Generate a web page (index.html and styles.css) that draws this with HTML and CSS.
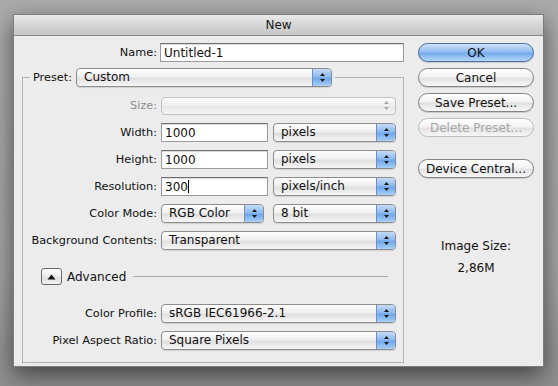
FILE: index.html
```html
<!DOCTYPE html>
<html lang="en">
<head>
    <meta charset="UTF-8">
    <title>New</title>
    <link rel="stylesheet" href="styles.css">
</head>
<body>

    <div class="dialog">
        <div class="titlebar">New</div>

        <div class="dialog-body">
            <!-- left: document settings -->
            <div class="main">
                <div class="name-row">
                    <span class="lbl name-lbl">Name:</span>
                    <div class="field name-field">Untitled-1</div>
                </div>

                <fieldset class="group">
                    <legend>
                        <span class="legend-lbl">Preset:</span>
                        <div class="select preset">
                            <span class="value">Custom</span>
                            <span class="arrows"><svg width="7" height="11" viewBox="0 0 7 11"><path d="M3.5 1 L6 4 L1 4 Z M3.5 10 L6 7 L1 7 Z" fill="#1a1a1a"/></svg></span>
                        </div>
                    </legend>

                    <div class="row">
                        <span class="lbl disabled">Size:</span>
                        <div class="select size off">
                            <span class="value"></span>
                            <span class="arrows"><svg width="7" height="11" viewBox="0 0 7 11"><path d="M3.5 1 L6 4 L1 4 Z M3.5 10 L6 7 L1 7 Z" fill="#a8a8a8"/></svg></span>
                        </div>
                    </div>

                    <div class="row">
                        <span class="lbl">Width:</span>
                        <div class="field num">1000</div>
                        <div class="select unit">
                            <span class="value">pixels</span>
                            <span class="arrows"><svg width="7" height="11" viewBox="0 0 7 11"><path d="M3.5 1 L6 4 L1 4 Z M3.5 10 L6 7 L1 7 Z" fill="#1a1a1a"/></svg></span>
                        </div>
                    </div>

                    <div class="row">
                        <span class="lbl">Height:</span>
                        <div class="field num">1000</div>
                        <div class="select unit">
                            <span class="value">pixels</span>
                            <span class="arrows"><svg width="7" height="11" viewBox="0 0 7 11"><path d="M3.5 1 L6 4 L1 4 Z M3.5 10 L6 7 L1 7 Z" fill="#1a1a1a"/></svg></span>
                        </div>
                    </div>

                    <div class="row">
                        <span class="lbl">Resolution:</span>
                        <div class="field num">300<span class="caret"></span></div>
                        <div class="select unit">
                            <span class="value">pixels/inch</span>
                            <span class="arrows"><svg width="7" height="11" viewBox="0 0 7 11"><path d="M3.5 1 L6 4 L1 4 Z M3.5 10 L6 7 L1 7 Z" fill="#1a1a1a"/></svg></span>
                        </div>
                    </div>

                    <div class="row">
                        <span class="lbl">Color Mode:</span>
                        <div class="select mode">
                            <span class="value">RGB Color</span>
                            <span class="arrows"><svg width="7" height="11" viewBox="0 0 7 11"><path d="M3.5 1 L6 4 L1 4 Z M3.5 10 L6 7 L1 7 Z" fill="#1a1a1a"/></svg></span>
                        </div>
                        <div class="select unit">
                            <span class="value">8 bit</span>
                            <span class="arrows"><svg width="7" height="11" viewBox="0 0 7 11"><path d="M3.5 1 L6 4 L1 4 Z M3.5 10 L6 7 L1 7 Z" fill="#1a1a1a"/></svg></span>
                        </div>
                    </div>

                    <div class="row">
                        <span class="lbl">Background Contents:</span>
                        <div class="select wide">
                            <span class="value">Transparent</span>
                            <span class="arrows"><svg width="7" height="11" viewBox="0 0 7 11"><path d="M3.5 1 L6 4 L1 4 Z M3.5 10 L6 7 L1 7 Z" fill="#1a1a1a"/></svg></span>
                        </div>
                    </div>

                    <!-- advanced disclosure -->
                    <div class="advanced">
                        <button class="toggle"><svg width="9" height="6" viewBox="0 0 9 6"><path d="M4.5 0.5 L8.5 5.5 L0.5 5.5 Z" fill="#111"/></svg></button>
                        <span class="adv-lbl">Advanced</span>
                        <span class="adv-line"></span>
                    </div>

                    <div class="row">
                        <span class="lbl">Color Profile:</span>
                        <div class="select wide">
                            <span class="value">sRGB IEC61966-2.1</span>
                            <span class="arrows"><svg width="7" height="11" viewBox="0 0 7 11"><path d="M3.5 1 L6 4 L1 4 Z M3.5 10 L6 7 L1 7 Z" fill="#1a1a1a"/></svg></span>
                        </div>
                    </div>

                    <div class="row">
                        <span class="lbl">Pixel Aspect Ratio:</span>
                        <div class="select wide">
                            <span class="value">Square Pixels</span>
                            <span class="arrows"><svg width="7" height="11" viewBox="0 0 7 11"><path d="M3.5 1 L6 4 L1 4 Z M3.5 10 L6 7 L1 7 Z" fill="#1a1a1a"/></svg></span>
                        </div>
                    </div>
                </fieldset>
            </div>

            <!-- right: buttons -->
            <div class="side">
                <button class="btn primary">OK</button>
                <button class="btn">Cancel</button>
                <button class="btn">Save Preset...</button>
                <button class="btn" disabled>Delete Preset...</button>
                <button class="btn device">Device Central...</button>

                <div class="image-size">
                    <div>Image Size:</div>
                    <div class="size-value">2,86M</div>
                </div>
            </div>
        </div>
    </div>

</body>
</html>
```

FILE: styles.css
```css
body {
    font-family: "DejaVu Sans", sans-serif;
    font-size: 11.3px;
    color: #111;
    background: linear-gradient(#ababab, #a4a4a4 70%, #8e8e8e);
    margin: 0;
    padding: 14px 0 0 13px;
    height: 386px;
    box-sizing: border-box;
    overflow: hidden;
}

.dialog {
    width: 531px;
    height: 353px;
    background: #ececec;
    border: 1px solid #7d7d7d;
    box-sizing: border-box;
    box-shadow: 0 8px 22px rgba(0, 0, 0, 0.55);
}

.titlebar {
    height: 20px;
    line-height: 20px;
    text-align: center;
    font-size: 12px;
    color: #1a1a1a;
    background: linear-gradient(#e9e9e9, #d2d2d2 60%, #c6c6c6);
    border-bottom: 1px solid #8a8a8a;
}

.dialog-body {
    display: flex;
    padding: 7px 9px 0 8px;
}

.main {
    width: 382px;
}

.lbl {
    width: 134px;
    text-align: right;
    flex-shrink: 0;
    white-space: nowrap;
}

.disabled {
    color: #8c8c8c;
}

.name-row {
    display: flex;
    align-items: center;
    gap: 3px;
    height: 19px;
}

.name-lbl {
    width: 135px;
}

.field {
    height: 19px;
    line-height: 18px;
    box-sizing: border-box;
    background: white;
    border: 1px solid #9a9a9a;
    border-top-color: #6f6f6f;
    box-shadow: inset 0 1px 1px rgba(0, 0, 0, 0.15);
    padding-left: 3px;
    font-size: 12px;
}

.name-field {
    width: 245px;
}

.caret {
    display: inline-block;
    width: 1px;
    height: 13px;
    background: #000;
    vertical-align: -2px;
}

.group {
    margin: 6px 0 0 0;
    padding: 9px 7px 12px 0;
    border: 1px solid #b2b2b2;
    border-radius: 0;
}

.group legend {
    display: flex;
    align-items: center;
    gap: 4px;
    margin-left: 7px;
    padding: 0 3px;
}

.row {
    display: flex;
    align-items: center;
    gap: 4px;
    height: 19px;
    margin-bottom: 8px;
}

.select {
    display: flex;
    height: 19px;
    box-sizing: border-box;
    border: 1px solid #8d8d8d;
    border-radius: 4px;
    background: linear-gradient(#fdfdfd, #f0f0f0 45%, #e0e0e0 55%, #f6f6f6);
    box-shadow: 0 1px 1px rgba(0, 0, 0, 0.12);
    overflow: hidden;
    font-size: 12px;
}

.select .value {
    flex: 1;
    padding-left: 7px;
    line-height: 17px;
    white-space: nowrap;
}

.select .arrows {
    width: 18px;
    display: flex;
    align-items: center;
    justify-content: center;
    border-left: 1px solid #6d8fc6;
    background: linear-gradient(#c4dbf7, #8ebbef 45%, #6fa6ea 55%, #a8d0f8);
}

.preset {
    width: 256px;
}

.size {
    width: 235px;
    height: 18px;
    border-color: #c2c2c2;
    box-shadow: none;
    background: linear-gradient(#fafafa, #efefef 50%, #e8e8e8 52%, #f3f3f3);
}

.off .arrows {
    background: none;
    border-left: none;
}

.num {
    width: 107px;
}

.field.num + .select {
    margin-left: 1px;
}

.unit {
    width: 123px;
}

.mode {
    width: 103px;
}

.mode + .unit {
    margin-left: 5px;
}

.wide {
    width: 235px;
}

.advanced {
    display: flex;
    align-items: center;
    height: 17px;
    margin: 18px 8px 19px 18px;
}

.toggle {
    width: 21px;
    height: 17px;
    padding: 0;
    display: flex;
    align-items: center;
    justify-content: center;
    border: 1px solid #686868;
    border-radius: 3px;
    background: linear-gradient(#fdfdfd, #ececec 50%, #dedede 52%, #f3f3f3);
}

.adv-lbl {
    margin-left: 5px;
    font-size: 12px;
}

.adv-line {
    flex: 1;
    height: 1px;
    background: #a9a9a9;
    margin-left: 7px;
}

.group .row:last-child {
    margin-bottom: 0;
}

.side {
    width: 116px;
    margin-left: 14px;
    display: flex;
    flex-direction: column;
}

.btn {
    height: 19px;
    padding: 0;
    font-family: "DejaVu Sans", sans-serif;
    font-size: 12px;
    color: #111;
    border: 1px solid #848484;
    border-radius: 10px;
    background: linear-gradient(#ffffff, #f3f3f3 45%, #e2e2e2 55%, #f7f7f7);
    box-shadow: 0 1px 1px rgba(0, 0, 0, 0.15);
    margin-bottom: 6px;
}

.btn.primary {
    border-color: #4b6ea6;
    background: linear-gradient(#cfe2f9, #93bdf0 45%, #76abec 55%, #b4d8fb);
    margin-bottom: 6px;
}

.btn:disabled {
    color: #a6a6a6;
    border-color: #bdbdbd;
    box-shadow: none;
}

.btn.device {
    margin-top: 16px;
}

.image-size {
    margin-top: 55px;
    text-align: center;
    font-size: 12px;
}

.size-value {
    margin-top: 8px;
}
```
